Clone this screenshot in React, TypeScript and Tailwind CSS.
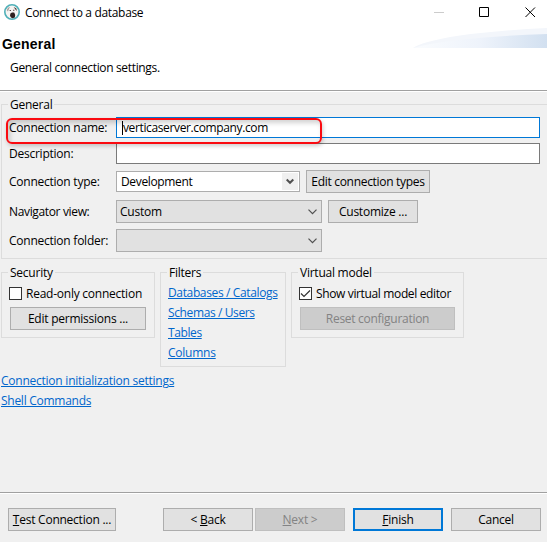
import type { ReactNode } from "react";

const Button = ({ className = "", disabled = false, primary = false, children }: { className?: string; disabled?: boolean; primary?: boolean; children: ReactNode }) => {
    const look = disabled
        ? "border border-[#bfbfbf] bg-[#cccccc] text-[#838383]"
        : primary
          ? "border-2 border-[#0078d7] bg-[#e1e1e1]"
          : "border border-[#adadad] bg-[#e1e1e1]";
    return (
        <button disabled={disabled} className={`flex h-[23px] shrink-0 items-center justify-center whitespace-nowrap ${look} ${className}`}>
            <span>{children}</span>
        </button>
    );
};

const Group = ({ title, className = "", children }: { title: string; className?: string; children: ReactNode }) => (
    <section className={`relative border border-[#dcdcdc] ${className}`}>
        <h2 className="absolute -top-2 left-[6px] h-4 bg-[#f0f0f0] px-[2px] whitespace-nowrap">{title}</h2>
        {children}
    </section>
);

const Link = ({ className = "", children }: { className?: string; children: ReactNode }) => (
    <a className={`block h-5 w-fit whitespace-nowrap text-[#0066cc] underline decoration-1 underline-offset-1 ${className}`}>{children}</a>
);

const Label = ({ className = "", children }: { className?: string; children: ReactNode }) => (
    <span className={`w-[107px] shrink-0 whitespace-nowrap ${className}`}>{children}</span>
);

const Chevron = () => (
    <svg width="9" height="6" viewBox="0 0 9 6" fill="none" stroke="#505050" strokeWidth="1.2">
        <path d="M0.5 0.7 4.5 4.7 8.5 0.7" />
    </svg>
);

const Checkbox = ({ checked = false }: { checked?: boolean }) => (
    <span className="flex h-[13px] w-[13px] shrink-0 items-center justify-center border border-[#333333] bg-white">
        {checked && (
            <svg width="11" height="11" viewBox="0 0 11 11" fill="none" stroke="#333333" strokeWidth="1.2">
                <path d="M1 5.5 4 8.5 10 2.5" />
            </svg>
        )}
    </span>
);

const Logo = () => (
    <svg width="16" height="16" viewBox="0 0 16 16">
        <circle cx="8" cy="8" r="7.2" fill="#f6f4f2" stroke="#50b0b8" strokeWidth="1.6" />
        <path d="M2.8 6.2 4 3.8 6.2 3 5 4.8 4 7.6Z" fill="#a79d9a" />
        <path d="M9.6 3 12.2 4.2 13.1 7 11.4 5.4Z" fill="#54423e" />
        <path d="M6.4 9.6 8 8.6 10.2 8.6 11.2 11 10.8 13.6 8.6 14.2 7 13.6 6 11.8Z" fill="#2e201e" />
        <path d="M5.6 6h1.4v1H5.6zM9 5.7h1.4v1H9z" fill="#5a4a48" />
    </svg>
);

const Header = () => (
    <header className="h-[92px] border-b border-white bg-white">
        <div className="h-[91px] border-b border-[#a0a0a0]">
            <div className="flex h-7 items-start pl-1">
                <div className="pt-1"><Logo /></div>
                <h1 className="grow pt-[5px] pl-[5px] tracking-[-0.33px]">Connect to a database</h1>
                <svg className="mt-[7px] mr-[11px]" width="102" height="11" viewBox="0 0 102 11" fill="none">
                    <path d="M0 5.5H10" stroke="#cccccc" />
                    <path d="M45.5 0.5h9v9h-9z" stroke="#000000" />
                    <path d="M91.5 0.5 101 10M101 0.5 91.5 10" stroke="#000000" />
                </svg>
            </div>
            <div className="flex h-5 justify-between">
                <h2 className="pt-2 pl-[2px] font-['Liberation_Sans',sans-serif] text-[14px] leading-4 font-bold tracking-[0.2px]">General</h2>
                <svg width="134" height="20" viewBox="0 0 134 20">
                    <defs>
                        <linearGradient id="wave">
                            <stop offset="0" stopColor="#fafcfe" />
                            <stop offset="0.5" stopColor="#eef3fb" />
                            <stop offset="1" stopColor="#d2e0f0" />
                        </linearGradient>
                    </defs>
                    <path d="M0 20C18 9 75 3 134 0V20Z" fill="#f3f6fb" />
                    <path d="M0 20C28 12 80 8 134 6V20Z" fill="url(#wave)" />
                </svg>
            </div>
            <p className="pt-3 pl-[10px] tracking-[-0.34px]">General connection settings.</p>
        </div>
    </header>
);

const App = () => {
    return (
        <main className="flex h-[542px] w-[547px] flex-col overflow-hidden bg-[#f0f0f0] font-['Open_Sans','Noto_Sans',sans-serif] text-[12px] leading-4 tracking-[-0.24px] text-black">
            <Header />

            <Group title="General" className="mt-3 ml-px h-[155px] border-r-0 pl-[7px]">
                <div className="relative mt-3 flex h-[21px] items-center">
                    <Label>Connection name:</Label>
                    <div className="flex h-[21px] w-[424px] items-center border border-[#0078d7] bg-white pl-[5px]">
                        <span className="h-[14px] w-px bg-black" />
                        <span className="tracking-[-0.37px]">verticaserver.company.com</span>
                    </div>
                    <div className="absolute top-px -left-[3px] h-[26px] w-[316px] rounded-[6px] border-2 border-[#fa0a10] shadow-[1px_2px_4px_rgba(0,0,0,0.2),inset_2px_3px_5px_rgba(0,0,0,0.18)]" />
                </div>
                <div className="mt-[5px] flex h-[21px] items-center">
                    <Label>Description:</Label>
                    <div className="h-[21px] w-[424px] border border-[#7a7a7a] bg-white" />
                </div>
                <div className="mt-[6px] flex h-[23px] items-center">
                    <Label>Connection type:</Label>
                    <div className="mr-[6px] flex h-[21px] w-[184px] items-center justify-between border border-[#adadad] bg-white pr-px pl-[4px]">
                        <span className="tracking-[-0.35px]">Development</span>
                        <span className="flex h-[17px] w-4 items-center justify-center bg-[#f0f0f0]">
                            <svg width="8" height="7" viewBox="0 0 8 7" fill="none" stroke="#505050" strokeWidth="2">
                                <path d="M0.7 1.5 4 4.8 7.3 1.5" />
                            </svg>
                        </span>
                    </div>
                    <Button className="w-[124px] tracking-[-0.3px]">Edit connection types</Button>
                </div>
                <div className="mt-[7px] flex h-[23px] items-center">
                    <Label className="tracking-[-0.35px]">Navigator view:</Label>
                    <div className="mr-[6px] flex h-[23px] w-[206px] items-center justify-between border border-[#adadad] bg-[#e1e1e1] pr-1 pl-[3px]">
                        <span>Custom</span>
                        <Chevron />
                    </div>
                    <Button className="w-[90px]">Customize ...</Button>
                </div>
                <div className="mt-[6px] flex h-[23px] items-center">
                    <Label>Connection folder:</Label>
                    <div className="flex h-[23px] w-[206px] items-center justify-end border border-[#adadad] bg-[#e1e1e1] pr-1">
                        <Chevron />
                    </div>
                </div>
            </Group>

            <div className="mt-[13px] ml-px flex h-[96px] items-start gap-[5px]">
                <Group title="Security" className="h-[66px] w-[154px] pt-[12px] pl-[7px]">
                    <div className="flex h-4 items-center gap-[4px] whitespace-nowrap">
                        <Checkbox />
                        <span className="pt-px">Read-only connection</span>
                    </div>
                    <Button className="mt-[6px] ml-px w-[136px]">Edit permissions ...</Button>
                </Group>
                <Group title="Filters" className="h-[95px] w-[126px] pt-[12px] pl-[7px]">
                    <Link className="tracking-[-0.36px]">Databases / Catalogs</Link>
                    <Link className="tracking-[-0.38px]">Schemas / Users</Link>
                    <Link className="tracking-[-0.4px]">Tables</Link>
                    <Link>Columns</Link>
                </Group>
                <Group title="Virtual model" className="h-[66px] w-[173px] pt-[12px] pl-[7px]">
                    <div className="flex h-4 items-center gap-[4px] whitespace-nowrap">
                        <Checkbox checked />
                        <span className="pt-px tracking-[-0.36px]">Show virtual model editor</span>
                    </div>
                    <Button disabled className="mt-[6px] ml-px w-[155px] tracking-[-0.28px]">Reset configuration</Button>
                </Group>
            </div>

            <div className="mt-[5px] grow pl-px">
                <Link>Connection initialization settings</Link>
                <Link className="tracking-[-0.27px]">Shell Commands</Link>
            </div>

            <footer className="h-[50px] border-t border-[#a0a0a0]">
                <div className="flex border-t border-white pt-[14px] pl-2">
                    <Button className="mr-[47px] w-[108px]"><u>T</u>est Connection ...</Button>
                    <Button className="mr-[2px] w-[90px]">&lt; <u>B</u>ack</Button>
                    <Button disabled className="mr-2 w-[90px]"><u>N</u>ext &gt;</Button>
                    <Button primary className="mr-2 w-[90px]"><u>F</u>inish</Button>
                    <Button className="w-[90px]">Cancel</Button>
                </div>
            </footer>
        </main>
    );
};

export default App;
